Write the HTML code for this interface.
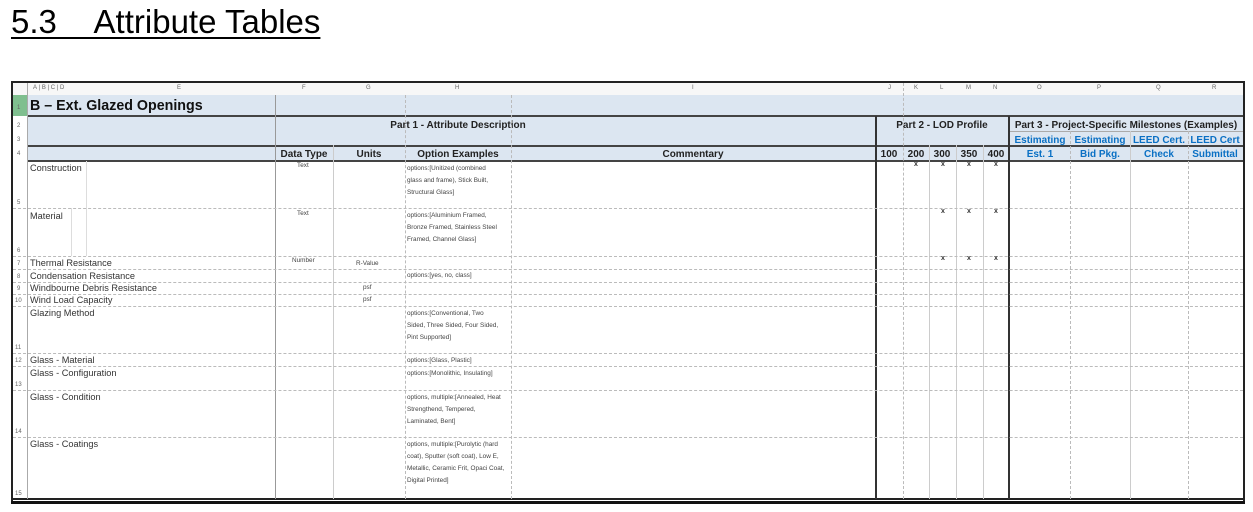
<!DOCTYPE html>
<html><head><meta charset="utf-8"><style>
*{margin:0;padding:0;box-sizing:border-box}
body{width:1253px;height:512px;background:#fff;position:relative;overflow:hidden;font-family:"Liberation Sans",sans-serif}
.a{position:absolute}
.t{position:absolute;white-space:nowrap}
.h{font-family:"Liberation Sans",sans-serif;font-weight:bold;font-size:10.5px;color:#222;transform:scaleX(0.95);transform-origin:0 0}
.c{transform:translateX(-50%) scaleX(0.95);transform-origin:50% 0}
.b{color:#0a70c4}
.s{font-size:6.4px;color:#444;line-height:12px}
.r{font-family:"Liberation Sans",sans-serif;font-size:9.6px;color:#333;transform:scaleX(0.96);transform-origin:0 0}
.n{font-size:6px;color:#666}
.hl{position:absolute;height:1px;border-top:1px dashed #bbb}
.vl{position:absolute;width:1px;background:#ccc}
.vd{position:absolute;width:1px;border-left:1px dashed #bbb}
.x{font-size:7px;font-weight:bold;color:#333}
</style></head><body>
<div class="t" style="left:11px;top:3px;font-size:33px;color:#000;text-decoration:underline;text-decoration-thickness:2px;text-underline-offset:4px">5.3&nbsp;&nbsp;&nbsp;&nbsp;Attribute Tables</div>

<div class="a" style="left:11px;top:81px;width:1234px;height:420px;border:2px solid #222;border-bottom:none"></div>
<div class="a" style="left:11px;top:498px;width:1234px;height:6px;border-top:2px solid #222;border-bottom:3px solid #111"></div>

<div class="a" style="left:13px;top:83px;width:1230px;height:12px;background:#f7f7f7"></div>
<div class="t n" style="left:33px;top:85px">A&nbsp;|&nbsp;B&nbsp;|&nbsp;C&nbsp;|&nbsp;D</div>
<div class="t n" style="left:177px;top:85px">E</div>
<div class="t n" style="left:302px;top:85px">F</div>
<div class="t n" style="left:366px;top:85px">G</div>
<div class="t n" style="left:455px;top:85px">H</div>
<div class="t n" style="left:692px;top:85px">I</div>
<div class="t n" style="left:888px;top:85px">J</div>
<div class="t n" style="left:914px;top:85px">K</div>
<div class="t n" style="left:940px;top:85px">L</div>
<div class="t n" style="left:966px;top:85px">M</div>
<div class="t n" style="left:993px;top:85px">N</div>
<div class="t n" style="left:1037px;top:85px">O</div>
<div class="t n" style="left:1097px;top:85px">P</div>
<div class="t n" style="left:1156px;top:85px">Q</div>
<div class="t n" style="left:1212px;top:85px">R</div>

<div class="a" style="left:27px;top:95px;width:1216px;height:66px;background:#dce6f1"></div>
<div class="a" style="left:13px;top:95px;width:14px;height:21px;background:#7fbf8f"></div>
<div class="a" style="left:27px;top:115px;width:1216px;height:2px;background:#444"></div>
<div class="a" style="left:27px;top:145px;width:1216px;height:2px;background:#444"></div>
<div class="a" style="left:27px;top:160px;width:1216px;height:2px;background:#444"></div>
<div class="a" style="left:1009px;top:131px;width:234px;height:1px;background:#aaa"></div>

<div class="t n" style="left:17px;top:105px">1</div>
<div class="t n" style="left:17px;top:123px">2</div>
<div class="t n" style="left:17px;top:137px">3</div>
<div class="t n" style="left:17px;top:151px">4</div>
<div class="t n" style="left:17px;top:200px">5</div>
<div class="t n" style="left:17px;top:248px">6</div>
<div class="t n" style="left:17px;top:261px">7</div>
<div class="t n" style="left:17px;top:274px">8</div>
<div class="t n" style="left:17px;top:286px">9</div>
<div class="t n" style="left:15px;top:298px">10</div>
<div class="t n" style="left:15px;top:345px">11</div>
<div class="t n" style="left:15px;top:358px">12</div>
<div class="t n" style="left:15px;top:382px">13</div>
<div class="t n" style="left:15px;top:429px">14</div>
<div class="t n" style="left:15px;top:491px">15</div>

<div class="t h" style="left:30px;top:97px;font-size:15px;color:#111">B – Ext. Glazed Openings</div>
<div class="t h c" style="left:458px;top:119px">Part 1 - Attribute Description</div>
<div class="t h c" style="left:942px;top:119px">Part 2 - LOD Profile</div>
<div class="t h c" style="left:1126px;top:119px">Part 3 - Project-Specific Milestones (Examples)</div>
<div class="t h b c" style="left:1040px;top:134px">Estimating</div>
<div class="t h b c" style="left:1100px;top:134px">Estimating</div>
<div class="t h b c" style="left:1159px;top:134px">LEED Cert.</div>
<div class="t h b c" style="left:1215px;top:134px">LEED Cert</div>
<div class="t h c" style="left:304px;top:148px">Data Type</div>
<div class="t h c" style="left:369px;top:148px">Units</div>
<div class="t h c" style="left:458px;top:148px">Option Examples</div>
<div class="t h c" style="left:693px;top:148px">Commentary</div>
<div class="t h c" style="left:889px;top:148px">100</div>
<div class="t h c" style="left:916px;top:148px">200</div>
<div class="t h c" style="left:942px;top:148px">300</div>
<div class="t h c" style="left:969px;top:148px">350</div>
<div class="t h c" style="left:996px;top:148px">400</div>
<div class="t h b c" style="left:1040px;top:148px">Est. 1</div>
<div class="t h b c" style="left:1100px;top:148px">Bid Pkg.</div>
<div class="t h b c" style="left:1159px;top:148px">Check</div>
<div class="t h b c" style="left:1215px;top:148px">Submittal</div>

<div class="vl" style="left:27px;top:83px;height:416px;background:#aaa"></div>
<div class="vl" style="left:275px;top:95px;height:404px;background:#999"></div>
<div class="vl" style="left:333px;top:145px;height:354px"></div>
<div class="vd" style="left:405px;top:95px;height:404px"></div>
<div class="vd" style="left:511px;top:95px;height:404px"></div>
<div class="a" style="left:875px;top:116px;width:2px;height:383px;background:#333"></div>
<div class="vd" style="left:903px;top:83px;height:416px"></div>
<div class="vl" style="left:929px;top:145px;height:354px"></div>
<div class="vl" style="left:956px;top:145px;height:354px"></div>
<div class="vl" style="left:983px;top:145px;height:354px"></div>
<div class="a" style="left:1008px;top:116px;width:2px;height:383px;background:#333"></div>
<div class="vd" style="left:1070px;top:131px;height:368px"></div>
<div class="vl" style="left:1130px;top:131px;height:368px"></div>
<div class="vd" style="left:1188px;top:131px;height:368px"></div>
<div class="vl" style="left:86px;top:161px;height:47px;background:#ddd"></div>
<div class="vl" style="left:71px;top:208px;height:48px;background:#ddd"></div>
<div class="vl" style="left:86px;top:208px;height:48px;background:#ddd"></div>

<div class="hl" style="left:13px;top:208px;width:1230px"></div>
<div class="hl" style="left:13px;top:256px;width:1230px"></div>
<div class="hl" style="left:13px;top:269px;width:1230px"></div>
<div class="hl" style="left:13px;top:282px;width:1230px"></div>
<div class="hl" style="left:13px;top:294px;width:1230px"></div>
<div class="hl" style="left:13px;top:306px;width:1230px"></div>
<div class="hl" style="left:13px;top:353px;width:1230px"></div>
<div class="hl" style="left:13px;top:366px;width:1230px"></div>
<div class="hl" style="left:13px;top:390px;width:1230px"></div>
<div class="hl" style="left:13px;top:437px;width:1230px"></div>

<div class="t r" style="left:30px;top:163px">Construction</div>
<div class="t r" style="left:30px;top:211px">Material</div>
<div class="t r" style="left:30px;top:258px">Thermal Resistance</div>
<div class="t r" style="left:30px;top:271px">Condensation Resistance</div>
<div class="t r" style="left:30px;top:283px">Windbourne Debris Resistance</div>
<div class="t r" style="left:30px;top:295px">Wind Load Capacity</div>
<div class="t r" style="left:30px;top:308px">Glazing Method</div>
<div class="t r" style="left:30px;top:355px">Glass - Material</div>
<div class="t r" style="left:30px;top:368px">Glass - Configuration</div>
<div class="t r" style="left:30px;top:392px">Glass - Condition</div>
<div class="t r" style="left:30px;top:439px">Glass - Coatings</div>

<div class="t s" style="left:297px;top:160px">Text</div>
<div class="t s" style="left:297px;top:208px">Text</div>
<div class="t s" style="left:292px;top:255px">Number</div>
<div class="t s" style="left:356px;top:258px">R-Value</div>
<div class="t s" style="left:363px;top:282px">psf</div>
<div class="t s" style="left:363px;top:294px">psf</div>

<div class="t s" style="left:407px;top:163px">options:[Unitized (combined<br>glass and frame), Stick Built,<br>Structural Glass]</div>
<div class="t s" style="left:407px;top:210px">options:[Aluminium Framed,<br>Bronze Framed, Stainless Steel<br>Framed, Channel Glass]</div>
<div class="t s" style="left:407px;top:270px">options:[yes, no, class]</div>
<div class="t s" style="left:407px;top:308px">options:[Conventional, Two<br>Sided, Three Sided, Four Sided,<br>Pint Supported]</div>
<div class="t s" style="left:407px;top:355px">options:[Glass, Plastic]</div>
<div class="t s" style="left:407px;top:368px">options:[Monolithic, Insulating]</div>
<div class="t s" style="left:407px;top:392px">options, multiple:[Annealed, Heat<br>Strengthend, Tempered,<br>Laminated, Bent]</div>
<div class="t s" style="left:407px;top:439px">options, multiple:[Purolytic (hard<br>coat), Sputter (soft coat), Low E,<br>Metallic, Ceramic Frit, Opaci Coat,<br>Digital Printed]</div>

<div class="t x" style="left:914px;top:161px">x</div>
<div class="t x" style="left:941px;top:161px">x</div>
<div class="t x" style="left:967px;top:161px">x</div>
<div class="t x" style="left:994px;top:161px">x</div>
<div class="t x" style="left:941px;top:208px">x</div>
<div class="t x" style="left:967px;top:208px">x</div>
<div class="t x" style="left:994px;top:208px">x</div>
<div class="t x" style="left:941px;top:255px">x</div>
<div class="t x" style="left:967px;top:255px">x</div>
<div class="t x" style="left:994px;top:255px">x</div>
</body></html>
